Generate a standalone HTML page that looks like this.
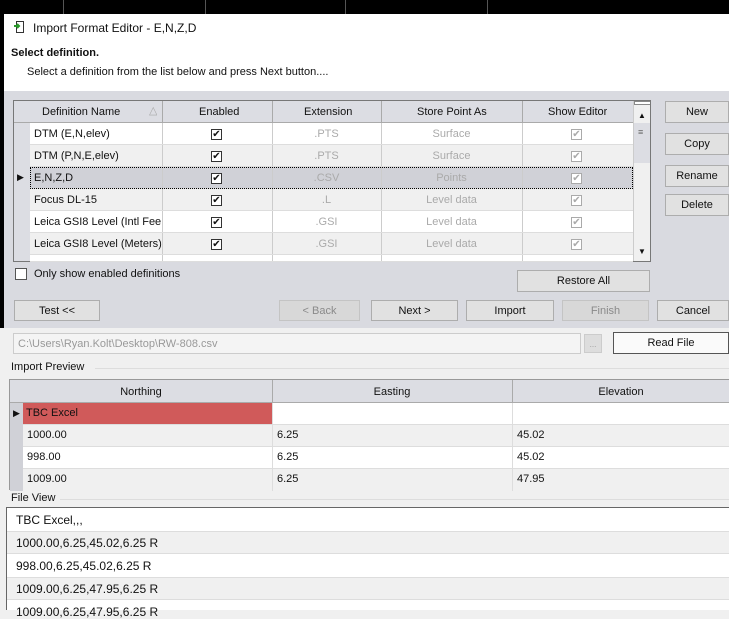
<!DOCTYPE html>
<html><head><meta charset="utf-8"><style>
*{box-sizing:border-box;margin:0;padding:0}
body{width:729px;height:610px;overflow:hidden;background:#f0f0f0;position:relative;font-family:"Liberation Sans",sans-serif;font-size:11px;color:#111}
.a{position:absolute}
.btn{position:absolute;background:#e1e1e1;border:1px solid #adadad;text-align:center;font-size:11px;line-height:20px;color:#111}
.dis{color:#8a8a8a;background:#d8d8d8;border-color:#c4c4c4}
.cell{position:absolute;white-space:nowrap;overflow:hidden}
.cb{position:absolute;width:11px;height:11px;border:1px solid #333;background:#fff;font-size:10px;line-height:9px;text-align:center}
.cbg{border-color:#aaa;color:#aaa}
</style></head><body>
<div class="a" style="left:0;top:0;width:729px;height:14px;background:#000"></div>
<div class="a" style="left:63px;top:0;width:1px;height:14px;background:#555"></div>
<div class="a" style="left:205px;top:0;width:1px;height:14px;background:#555"></div>
<div class="a" style="left:345px;top:0;width:1px;height:14px;background:#555"></div>
<div class="a" style="left:487px;top:0;width:1px;height:14px;background:#555"></div>
<div class="a" style="left:0;top:14px;width:4px;height:314px;background:#000"></div>
<div class="a" style="left:4px;top:14px;width:725px;height:77px;background:#fff"></div>
<svg class="a" style="left:13px;top:20px" width="12" height="14"><rect x="3.5" y="1.5" width="7" height="11" fill="none" stroke="#333"/><path d="M1 6h5M4 4l2 2-2 2" stroke="#2a9a2a" stroke-width="2" fill="none"/></svg>
<div class="a" style="left:33px;top:21px;font-size:12px">Import Format Editor - E,N,Z,D</div>
<div class="a" style="left:11px;top:47px;font-weight:bold;font-size:11px">Select definition.</div>
<div class="a" style="left:27px;top:66px;font-size:11px">Select a definition from the list below and press Next button....</div>
<div class="a" style="left:4px;top:91px;width:725px;height:237px;background:#d9dae0"></div>
<!-- grid 1 -->
<div class="a" style="left:13px;top:100px;width:638px;height:162px;border:1px solid #777;background:#fff;overflow:hidden">
<div class="a" style="left:0;top:0;width:620px;height:22px;background:#dcdde3;border-bottom:1px solid #aaa"></div>
<div class="cell" style="left:28px;top:5px">Definition Name</div><div class="cell" style="left:135px;top:3px;color:#aaa">△</div>
<div class="cell" style="left:185px;top:5px">Enabled</div>
<div class="cell" style="left:290px;top:5px">Extension</div>
<div class="cell" style="left:403px;top:5px">Store Point As</div>
<div class="cell" style="left:534px;top:5px">Show Editor</div>
<div class="a" style="left:0;top:22px;width:16px;height:140px;background:#dcdde3"></div>
<div class="a" style="left:619px;top:0;width:18px;height:162px;background:#f0f0f0;border-left:1px solid #ccc"></div>
<div class="a" style="left:620px;top:0;width:17px;height:4px;border:1px solid #888;background:#fff"></div>
<div class="cell" style="left:624px;top:10px;font-size:8px">▲</div>
<div class="a" style="left:620px;top:22px;width:16px;height:40px;background:#dcdde3"></div>
<div class="cell" style="left:624px;top:26px;font-size:9px;color:#666">≡</div>
<div class="cell" style="left:624px;top:146px;font-size:8px">▼</div>
</div>
<div id="g1"></div>
<script>
var rows=[["DTM (E,N,elev)",".PTS","Surface"],["DTM (P,N,E,elev)",".PTS","Surface"],["E,N,Z,D",".CSV","Points"],["Focus DL-15",".L","Level data"],["Leica GSI8 Level (Intl Fee",".GSI","Level data"],["Leica GSI8 Level (Meters)",".GSI","Level data"],["Leica GSI8 Level (US Feet)",".GSI","Level data"]];
var h="";
rows.forEach(function(r,i){var y=123+i*22;var bg=i==2?"#d0d1d7":(i%2?"#f0f0f0":"#fff");var hh=i==6?7:22;
h+='<div class="a" style="left:30px;top:'+y+'px;width:603px;height:'+hh+'px;background:'+bg+';border-bottom:1px solid #ddd;overflow:hidden">';
[132,242,351,492].forEach(function(x){h+='<div class="a" style="left:'+x+'px;top:0;width:1px;height:22px;background:#ccc"></div>'});
h+='<div class="cell" style="left:4px;top:5px">'+r[0]+'</div>';
h+='<div class="cb" style="left:181px;top:6px">✔</div>';
h+='<div class="cell" style="left:242px;width:109px;text-align:center;top:5px;color:#aaa">'+r[1]+'</div>';
h+='<div class="cell" style="left:351px;width:141px;text-align:center;top:5px;color:#aaa">'+r[2]+'</div>';
h+='<div class="cb cbg" style="left:541px;top:6px">✔</div></div>';
if(i==2)h+='<div class="a" style="left:30px;top:'+y+'px;width:603px;height:22px;border:1px dotted #000"></div><div class="cell" style="left:17px;top:'+(y+5)+'px;font-size:9px">▶</div>';
});
[[162],[272],[381],[522]].forEach(function(x){h+='<div class="a" style="left:'+x+'px;top:101px;width:1px;height:22px;background:#aaa"></div>'});
document.getElementById('g1').innerHTML=h;
</script>
<div class="btn" style="left:665px;top:101px;width:64px;height:22px">New</div>
<div class="btn" style="left:665px;top:133px;width:64px;height:22px">Copy</div>
<div class="btn" style="left:665px;top:165px;width:64px;height:22px">Rename</div>
<div class="btn" style="left:665px;top:194px;width:64px;height:22px">Delete</div>
<div class="a" style="left:15px;top:268px;width:12px;height:12px;border:1px solid #555;background:#fff"></div>
<div class="a" style="left:34px;top:268px">Only show enabled definitions</div>
<div class="btn" style="left:517px;top:270px;width:133px;height:22px">Restore All</div>
<div class="btn" style="left:14px;top:300px;width:86px;height:21px">Test &lt;&lt;</div>
<div class="btn dis" style="left:279px;top:300px;width:81px;height:21px">&lt; Back</div>
<div class="btn" style="left:371px;top:300px;width:87px;height:21px">Next &gt;</div>
<div class="btn" style="left:466px;top:300px;width:88px;height:21px">Import</div>
<div class="btn dis" style="left:562px;top:300px;width:87px;height:21px">Finish</div>
<div class="btn" style="left:657px;top:300px;width:72px;height:21px">Cancel</div>
<div class="a" style="left:13px;top:333px;width:568px;height:21px;background:#f4f4f4;border:1px solid #ccc;color:#999;padding:4px 4px">C:\Users\Ryan.Kolt\Desktop\RW-808.csv</div>
<div class="a" style="left:584px;top:334px;width:18px;height:19px;background:#ddd;border:1px solid #ccc;color:#999;text-align:center;font-size:8px;line-height:20px">...</div>
<div class="btn" style="left:613px;top:332px;width:116px;height:22px;background:#fafafa;border-color:#555">Read File</div>
<div class="a" style="left:11px;top:361px">Import Preview</div>
<div class="a" style="left:95px;top:368px;width:634px;height:1px;background:#ddd"></div>
<!-- grid2 -->
<div class="a" style="left:9px;top:379px;width:720px;height:111px;background:#fff;border:1px solid #999;border-right:none">
<div class="a" style="left:0;top:0;width:720px;height:23px;background:#dcdde3;border-bottom:1px solid #aaa"></div>
<div class="cell" style="left:0;width:262px;text-align:center;top:6px">Northing</div>
<div class="cell" style="left:262px;width:240px;text-align:center;top:6px">Easting</div>
<div class="cell" style="left:502px;width:218px;text-align:center;top:6px">Elevation</div>
<div class="a" style="left:262px;top:0;width:1px;height:23px;background:#aaa"></div>
<div class="a" style="left:502px;top:0;width:1px;height:23px;background:#aaa"></div>
<div class="a" style="left:0;top:23px;width:13px;height:88px;background:#d0d1d7"></div>
<div class="cell" style="left:3px;top:28px;font-size:9px">▶</div>
<div class="a" style="left:13px;top:23px;width:249px;height:21px;background:#d05a5a"></div>
<div class="cell" style="left:16px;top:27px">TBC Excel</div>
<div class="a" style="left:13px;top:45px;width:707px;height:21px;background:#f0f0f0"></div>
<div class="a" style="left:13px;top:89px;width:707px;height:22px;background:#f0f0f0"></div>
<div class="a" style="left:13px;top:44px;width:707px;height:1px;background:#ddd"></div>
<div class="a" style="left:13px;top:66px;width:707px;height:1px;background:#ddd"></div>
<div class="a" style="left:13px;top:88px;width:707px;height:1px;background:#ddd"></div>
<div class="a" style="left:262px;top:23px;width:1px;height:88px;background:#ddd"></div>
<div class="a" style="left:502px;top:23px;width:1px;height:88px;background:#ddd"></div>
<div class="cell" style="left:17px;top:49px">1000.00</div><div class="cell" style="left:267px;top:49px">6.25</div><div class="cell" style="left:507px;top:49px">45.02</div>
<div class="cell" style="left:17px;top:71px">998.00</div><div class="cell" style="left:267px;top:71px">6.25</div><div class="cell" style="left:507px;top:71px">45.02</div>
<div class="cell" style="left:17px;top:93px">1009.00</div><div class="cell" style="left:267px;top:93px">6.25</div><div class="cell" style="left:507px;top:93px">47.95</div>
</div>
<div class="a" style="left:11px;top:492px">File View</div>
<div class="a" style="left:60px;top:499px;width:669px;height:1px;background:#ddd"></div>
<div class="a" style="left:6px;top:507px;width:723px;height:103px;background:#fff;border:1px solid #666;border-right:none;border-bottom:none;font-size:12px">
<div class="a" style="left:0;top:23px;width:723px;height:23px;background:#f0f0f0;border-top:1px solid #ddd;border-bottom:1px solid #ddd"></div>
<div class="a" style="left:0;top:69px;width:723px;height:23px;background:#f0f0f0;border-top:1px solid #ddd;border-bottom:1px solid #ddd"></div>
<div class="cell" style="left:9px;top:5px">TBC Excel,,,</div>
<div class="cell" style="left:9px;top:28px">1000.00,6.25,45.02,6.25 R</div>
<div class="cell" style="left:9px;top:51px">998.00,6.25,45.02,6.25 R</div>
<div class="cell" style="left:9px;top:74px">1009.00,6.25,47.95,6.25 R</div>
<div class="cell" style="left:9px;top:97px">1009.00,6.25,47.95,6.25 R</div>
</div>
</body></html>
